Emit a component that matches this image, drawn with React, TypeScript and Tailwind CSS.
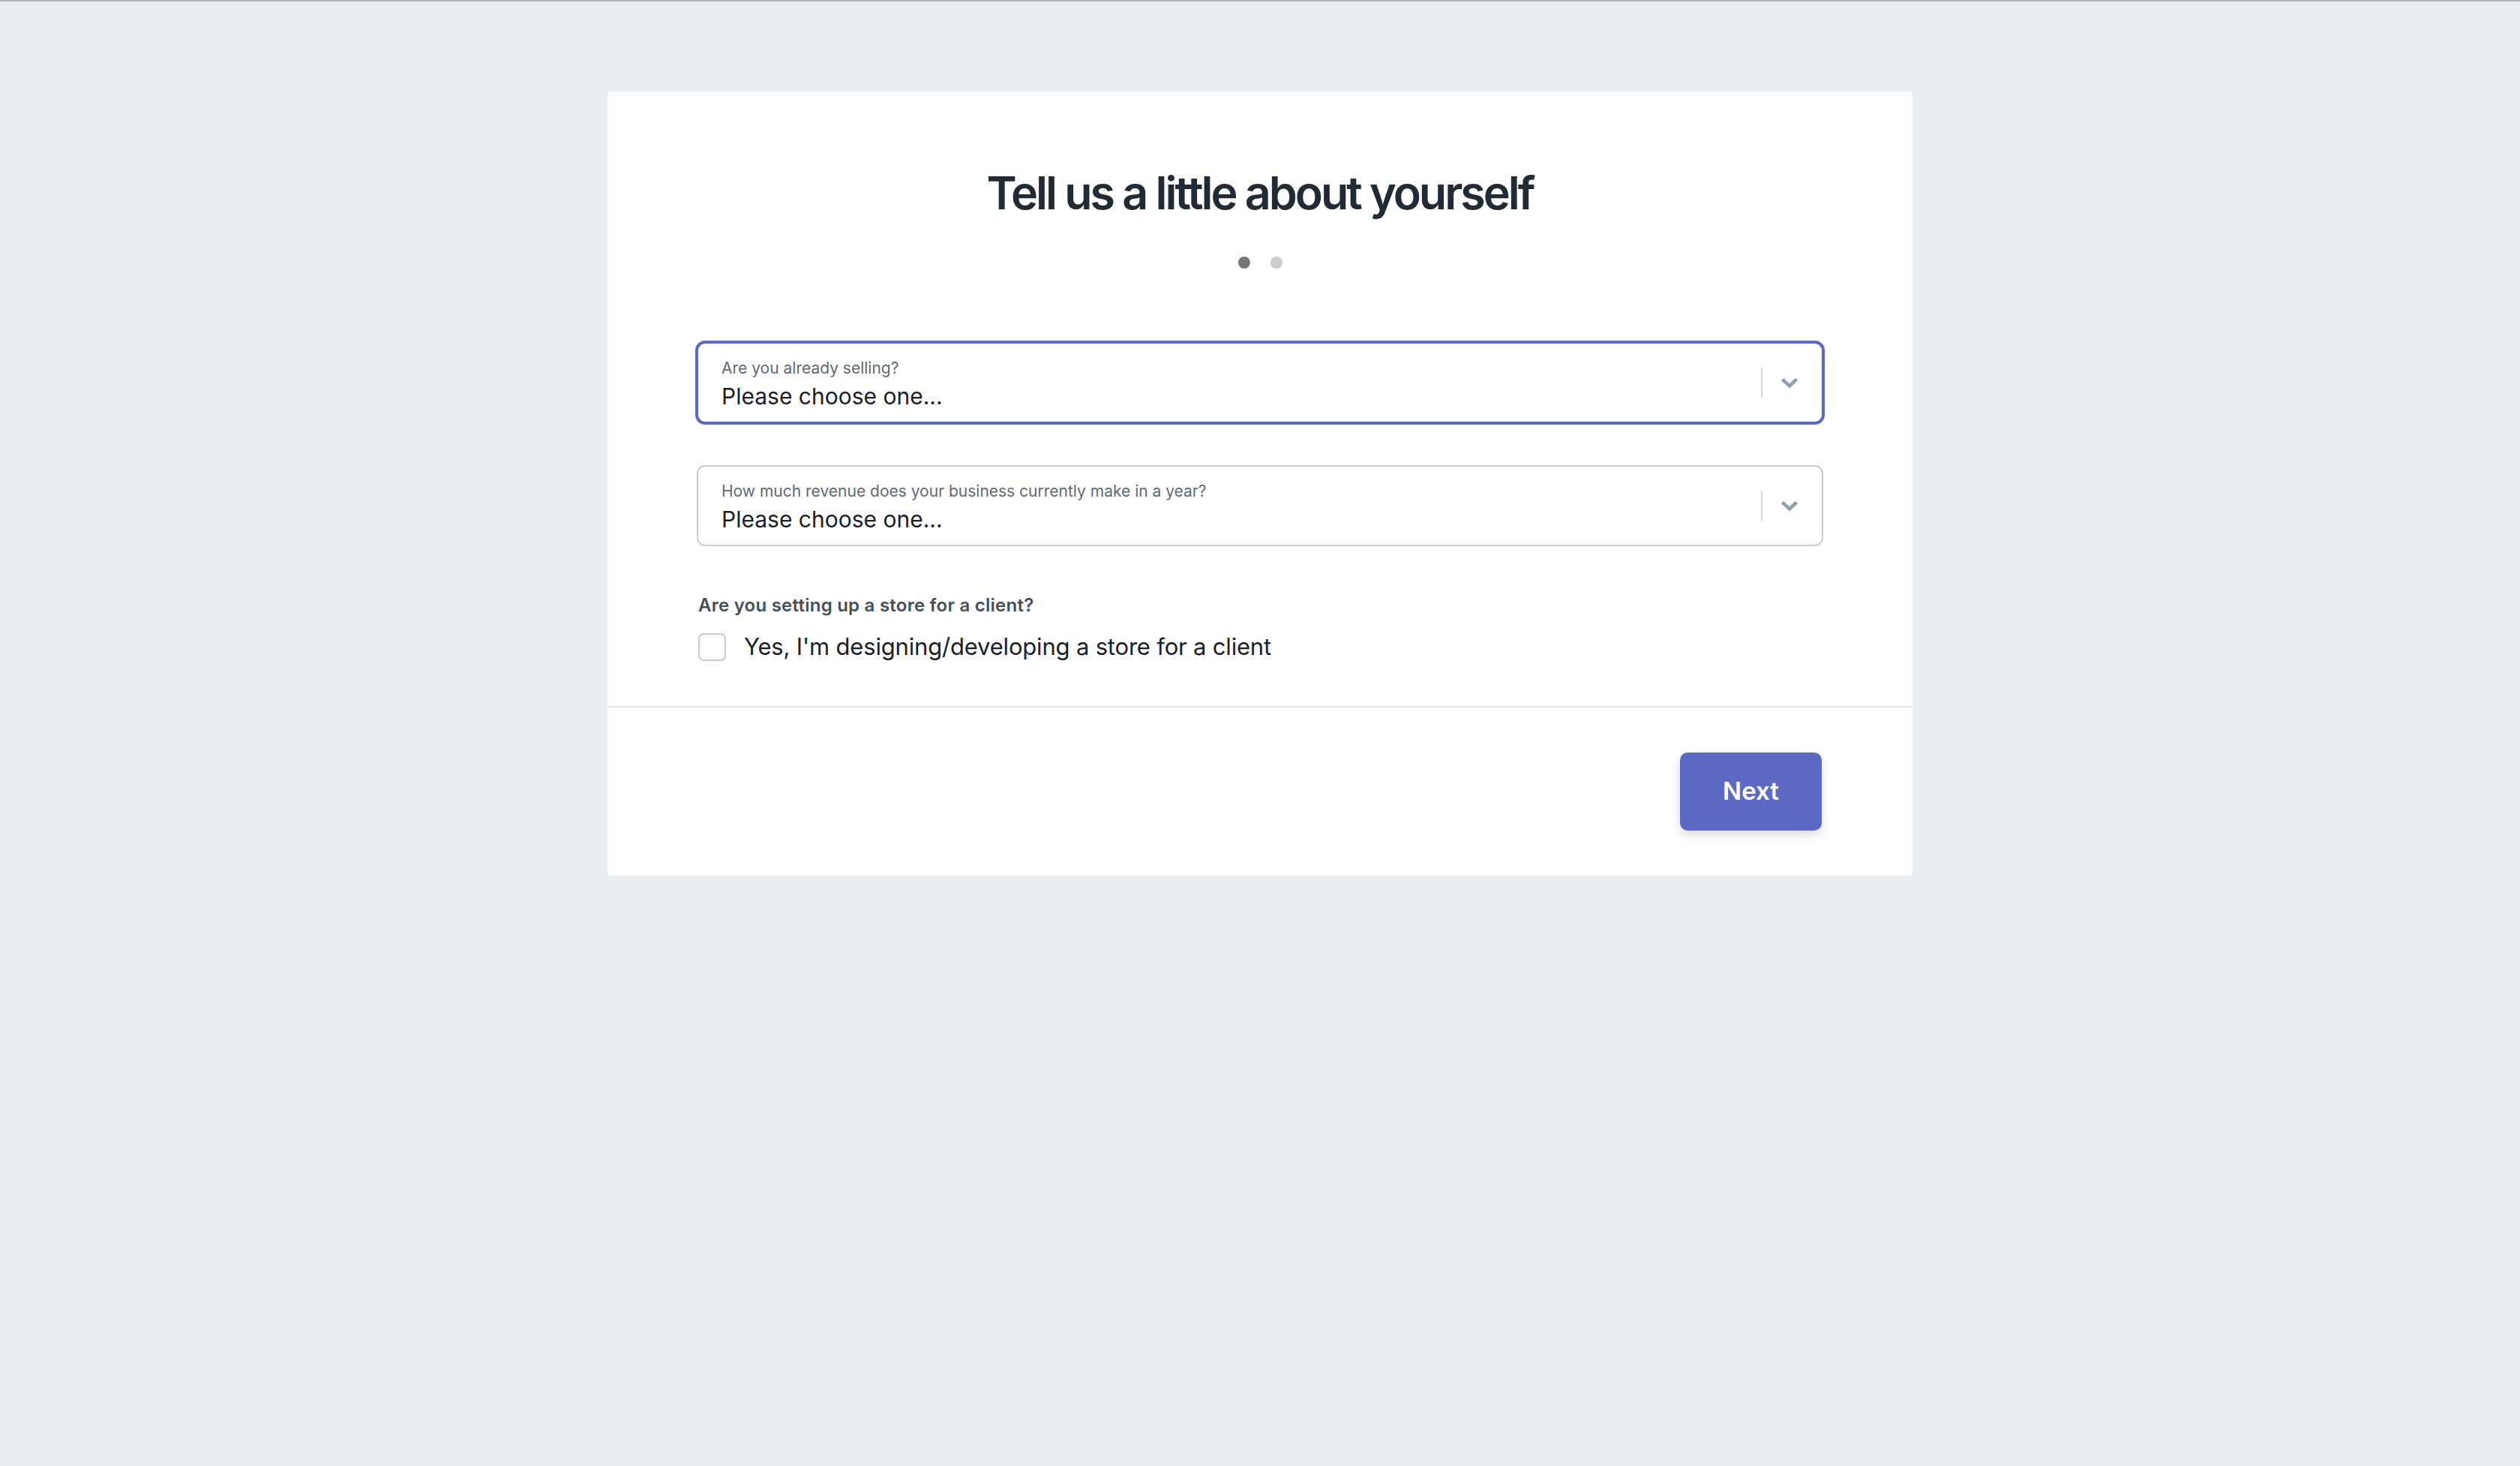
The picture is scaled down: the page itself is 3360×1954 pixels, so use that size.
import React from "react";

function Chevron() {
  return (
    <svg width="24" height="15" viewBox="0 0 24 15" fill="none">
      <polyline points="2.5,2.5 12,11.5 21.5,2.5" stroke="#919eab" strokeWidth="4.5" strokeLinejoin="miter" />
    </svg>
  );
}

function SelectBox({ label, focused }: { label: string; focused?: boolean }) {
  return (
    <div
      className={
        "flex items-center rounded-[11px] border-2 bg-white pl-[31px] pr-[31px] " +
        (focused ? "border-[#5c6ac4] shadow-[0_0_0_2px_#5c6ac4]" : "border-[#c4cdd5]")
      }
    >
      <div className="flex flex-1 flex-col pt-[22px] pb-[18px]">
        <span className="text-[21px] leading-[22px] text-[#5f6a75]">{label}</span>
        <span className="mt-[11px] text-[30px] leading-[31px] text-[#1c2127]">Please choose one...</span>
      </div>
      <div className="h-[40px] w-[2px] bg-[#d3d9df]" />
      <div className="ml-[24px] flex items-center">
        <Chevron />
      </div>
    </div>
  );
}

export default function App() {
  return (
    <div
      className="min-h-screen border-t-2 border-[#b4b7ba] bg-[#e9edf0] pt-[120px]"
      style={{ fontFamily: "Inter, 'Noto Sans', sans-serif" }}
    >
      <div className="mx-auto w-[1740px] bg-white">
        <div className="px-[119px] pt-[104px] pb-[60px]">
          <h1 className="text-center text-[61px] font-semibold leading-[62px] tracking-[-0.05em] text-[#212b36]">
            Tell us a little about yourself
          </h1>
          <div className="mt-[54px] flex justify-center gap-[27px]">
            <span className="h-[16px] w-[16px] rounded-full bg-[#777777]" />
            <span className="h-[16px] w-[16px] rounded-full bg-[#cccccc]" />
          </div>
          <div className="mt-[98px]">
            <SelectBox label="Are you already selling?" focused />
          </div>
          <div className="mt-[56px]">
            <SelectBox label="How much revenue does your business currently make in a year?" />
          </div>
          <div className="mt-[67px] pl-[2px]">
            <div className="text-[24px] font-semibold leading-[23px] tracking-[0.01em] text-[#454f5b]">
              Are you setting up a store for a client?
            </div>
            <label className="mt-[25px] flex items-center gap-[24px]">
              <span className="h-[37px] w-[37px] rounded-[7px] border-2 border-[#c4cdd5] bg-white shadow-[inset_0_2px_3px_rgba(0,0,0,0.06)]" />
              <span className="text-[31px] leading-[38px] tracking-[-0.006em] text-[#1c2127]">
                Yes, I'm designing/developing a store for a client
              </span>
            </label>
          </div>
        </div>
        <div className="h-[2px] bg-[#e3e5e7]" />
        <div className="flex justify-end px-[121px] pt-[60px] pb-[60px]">
          <button className="flex h-[104px] w-[189px] items-center justify-center rounded-[10px] bg-[#5c6ac4] text-[33px] font-semibold text-white shadow-[0_6px_14px_rgba(0,0,0,0.14)]">
            Next
          </button>
        </div>
      </div>
    </div>
  );
}
